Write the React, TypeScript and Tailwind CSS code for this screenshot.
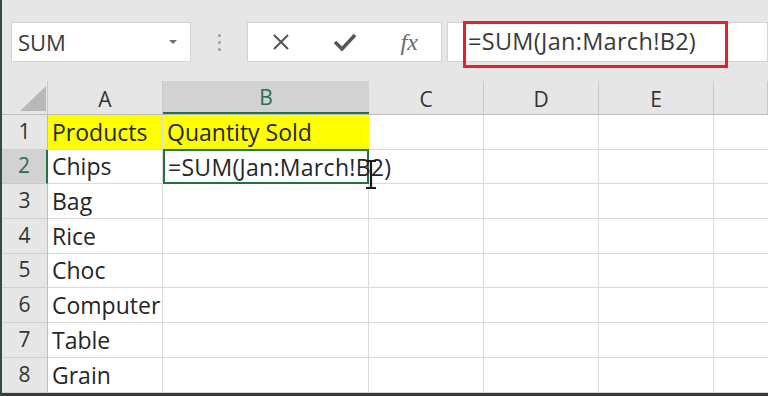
import React from "react";

const cols = [
  { key: "A", w: "w-[115px]" },
  { key: "B", w: "w-[206px]" },
  { key: "C", w: "w-[115px]" },
  { key: "D", w: "w-[115px]" },
  { key: "E", w: "w-[115px]" },
  { key: "", w: "flex-1" },
];

const products = ["Products", "Chips", "Bag", "Rice", "Choc", "Computer", "Table", "Grain"];

const font = { fontFamily: "'Open Sans', Lato, sans-serif" };

export default function App() {
  return (
    <div
      className="relative w-[768px] h-[396px] overflow-hidden bg-[#e6e6e6] border-l-2 border-[#2f4f3a] text-[#262626]"
      style={font}
    >
      {/* formula bar */}
      <div className="flex items-center h-[40px] mt-[22px] ml-[9px]">
        <div className="w-[180px] h-full bg-white border border-[#d4d4d4] flex items-center justify-between pl-[6px] pr-[13px]">
          <span className="text-[22px] text-[#3a3a3a]">SUM</span>
          <span className="w-0 h-0 border-l-[4px] border-r-[4px] border-t-[4px] border-l-transparent border-r-transparent border-t-[#707070]" />
        </div>
        <div className="w-[56px] flex flex-col items-center gap-[4px]">
          <span className="w-[3px] h-[3px] rounded-full bg-[#9a9a9a]" />
          <span className="w-[3px] h-[3px] rounded-full bg-[#9a9a9a]" />
          <span className="w-[3px] h-[3px] rounded-full bg-[#9a9a9a]" />
        </div>
        <div className="w-[195px] h-full bg-white border border-[#d4d4d4] flex items-center">
          <div className="w-[66px] flex justify-center">
            <svg width="20" height="20" viewBox="0 0 20 20">
              <path d="M3 3 L17 17 M17 3 L3 17" stroke="#555" strokeWidth="2" fill="none" />
            </svg>
          </div>
          <div className="w-[64px] flex justify-center">
            <svg width="24" height="20" viewBox="0 0 24 20">
              <path d="M2 10 L9 17 L22 3" stroke="#555" strokeWidth="3.4" fill="none" />
            </svg>
          </div>
          <div className="w-[64px] flex justify-center">
            <span
              className="text-[24px] italic text-[#6a6a6a] leading-none"
              style={{ fontFamily: "'Liberation Serif', serif" }}
            >
              fx
            </span>
          </div>
        </div>
        <div className="flex-1 h-full ml-[5px] bg-white border border-[#d4d4d4] flex items-center pl-[20px]">
          <span className="text-[23.5px] tracking-[0.3px] text-[#3a3a3a] whitespace-nowrap">=SUM(Jan:March!B2)</span>
        </div>
      </div>

      {/* annotation box */}
      <div className="absolute left-[461px] top-[21px] w-[265px] h-[47px] border-[3px] border-[#e3202b]" />

      {/* column headers */}
      <div className="flex h-[34px] mt-[19px] border-b border-[#bdbdbd]">
        <div className="w-[46px] relative border-r border-[#c8c8c8]">
          <svg className="absolute left-[18px] top-[5px]" width="26" height="25" viewBox="0 0 26 25">
            <path d="M26 0 L26 25 L0 25 Z" fill="#b8b8b8" />
          </svg>
        </div>
        {cols.map((c) => (
          <div
            key={c.key || "rest"}
            className={`${c.w} flex items-end justify-center pb-[4px] text-[21px] leading-none ${
              c.key === "B"
                ? "bg-[#d2d2d2] text-[#2f6b4c] border-b-2 border-[#217346]"
                : "border-r border-[#c8c8c8] text-[#333]"
            }`}
          >
            {c.key}
          </div>
        ))}
      </div>

      {/* rows */}
      {products.map((p, i) => {
        const row = i + 1;
        const active = row === 2;
        return (
          <div key={row} className="flex h-[34.7px]">
            <div
              className={`w-[46px] flex items-end justify-center pb-[7px] text-[21px] leading-none border-b ${
                active
                  ? "bg-[#d2d2d2] text-[#2f6b4c] border-r-2 border-r-[#217346] border-b-[#c8c8c8]"
                  : "border-r border-r-[#bdbdbd] border-b-[#d0d0d0] text-[#333]"
              }`}
            >
              {row}
            </div>
            <div
              className={`w-[115px] flex items-end pl-[4px] pb-[5px] text-[23px] leading-none whitespace-nowrap border-r border-b border-[#dadada] ${
                row === 1 ? "bg-[#ffff00]" : "bg-white"
              }`}
            >
              {p}
            </div>
            {row === 1 ? (
              <div className="w-[206px] flex items-end pl-[4px] pb-[5px] text-[23px] leading-none whitespace-nowrap bg-[#ffff00] border-b border-[#dadada]">
                Quantity Sold
              </div>
            ) : active ? (
              <div className="w-[206px] relative z-10 flex items-end pl-[3px] pb-[3px] text-[23px] tracking-[0.3px] leading-none whitespace-nowrap bg-white border-2 border-[#217346] -mt-[1px]">
                <span>=SUM(Jan:March!B2)</span>
                <svg className="absolute left-[199px] top-[9px]" width="14" height="30" viewBox="0 0 14 30">
                  <path d="M2 1 H12 M7 1 V28 M2 28 H12" stroke="#1a1a1a" strokeWidth="2.2" fill="none" />
                </svg>
              </div>
            ) : (
              <div className="w-[206px] bg-white border-r border-b border-[#dadada]" />
            )}
            {["C", "D", "E"].map((k) => (
              <div key={k} className="w-[115px] bg-white border-r border-b border-[#dadada]" />
            ))}
            <div className="flex-1 bg-white border-b border-[#dadada]" />
          </div>
        );
      })}
      <div className="h-[4px] bg-[#3a3a3a]" />
    </div>
  );
}
